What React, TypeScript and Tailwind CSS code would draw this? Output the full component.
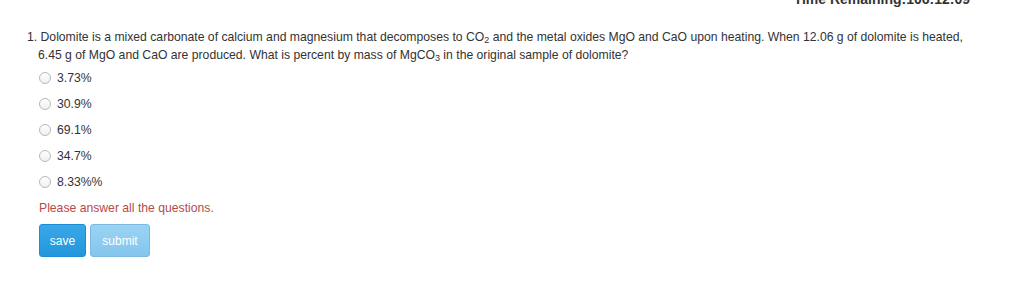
export default function App() {
  const options = ["3.73%", "30.9%", "69.1%", "34.7%", "8.33%%"];
  return (
    <div className="w-[1024px] h-[303px] bg-white overflow-hidden text-[#333] text-[12.2px] font-['Liberation_Sans',Arial,sans-serif]">
      <div className="h-[10px] relative">
        <div className="absolute right-[54px] top-[-10px] text-[14px] font-bold leading-[18px] text-[#333]">
          Time Remaining:106:12:09
        </div>
      </div>
      <div className="pl-[27px] pt-[18px] pr-[40px]">
        <p className="leading-[18px]">
          1. Dolomite is a mixed carbonate of calcium and magnesium that decomposes to CO
          <sub className="text-[9px] leading-none">2</sub> and the metal oxides MgO and CaO upon heating. When 12.06 g of dolomite is heated,
          <br />
          <span className="pl-[11px]">
            6.45 g of MgO and CaO are produced. What is percent by mass of MgCO<sub className="text-[9px] leading-none">3</sub> in the original sample of dolomite?
          </span>
        </p>
        <div className="pl-[12px] pt-[1px] flex flex-col">
          {options.map((o) => (
            <label key={o} className="flex items-center h-[26px] gap-[6px]">
              <span className="w-[12px] h-[12px] rounded-full border border-[#b8b8b8] bg-gradient-to-b from-white to-[#f0f0f0]" />
              <span>{o}</span>
            </label>
          ))}
          <div className="text-[#b94a48] mt-[4px] leading-[18px]">Please answer all the questions.</div>
          <div className="flex gap-[4px] mt-[7px]">
            <button className="h-[33px] w-[47px] rounded-[3px] border border-[#1f8dd6] bg-gradient-to-b from-[#3aa8e8] to-[#2196db] text-white text-[12px]">
              save
            </button>
            <button className="h-[33px] w-[60px] rounded-[3px] border border-[#7fb8de] bg-gradient-to-b from-[#9ad3f3] to-[#84c6ee] text-white text-[12px]">
              submit
            </button>
          </div>
        </div>
      </div>
    </div>
  );
}
